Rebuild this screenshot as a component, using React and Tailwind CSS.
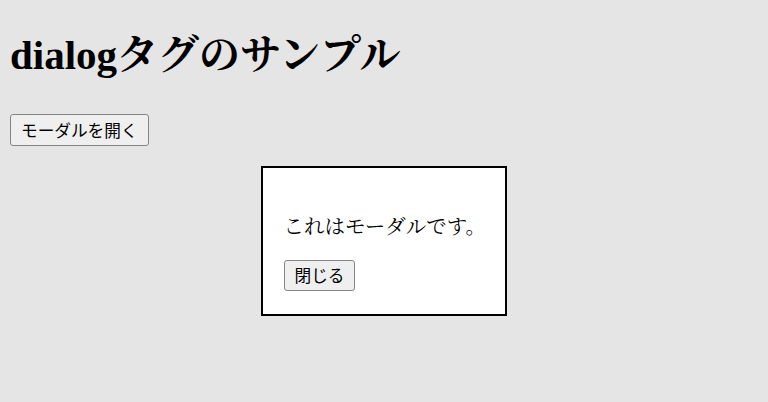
export default function App() {
  const serif = { fontFamily: '"Liberation Serif", "Noto Serif CJK JP", "Noto Sans CJK JP", serif' }
  return (
    <div className="relative min-h-[402px] bg-[#e5e5e5] px-[10px] pt-[31px] text-black" style={serif}>
      <h1 className="text-[41px] font-bold leading-[48px]">dialogタグのサンプル</h1>

      <button
        type="button"
        className="mt-[35px] flex h-[32px] items-center rounded-[3px] border border-[#858585] bg-[#efefef] px-[10px] text-[16.67px] font-['Noto_Sans_CJK_JP',sans-serif]"
      >
        モーダルを開く
      </button>

      {/* open modal */}
      <div className="absolute left-1/2 top-[166px] flex h-[150px] w-[246px] -translate-x-1/2 flex-col border-[2.5px] border-black bg-white pl-[20.5px] pt-[45px]">
        <p className="text-[20.5px] leading-[28px]">これはモーダルです。</p>
        <button
          type="button"
          className="mt-[19px] flex h-[31px] w-fit items-center rounded-[3px] border border-[#858585] bg-[#efefef] px-[10px] text-[16.67px] font-['Noto_Sans_CJK_JP',sans-serif]"
        >
          閉じる
        </button>
      </div>
    </div>
  )
}
